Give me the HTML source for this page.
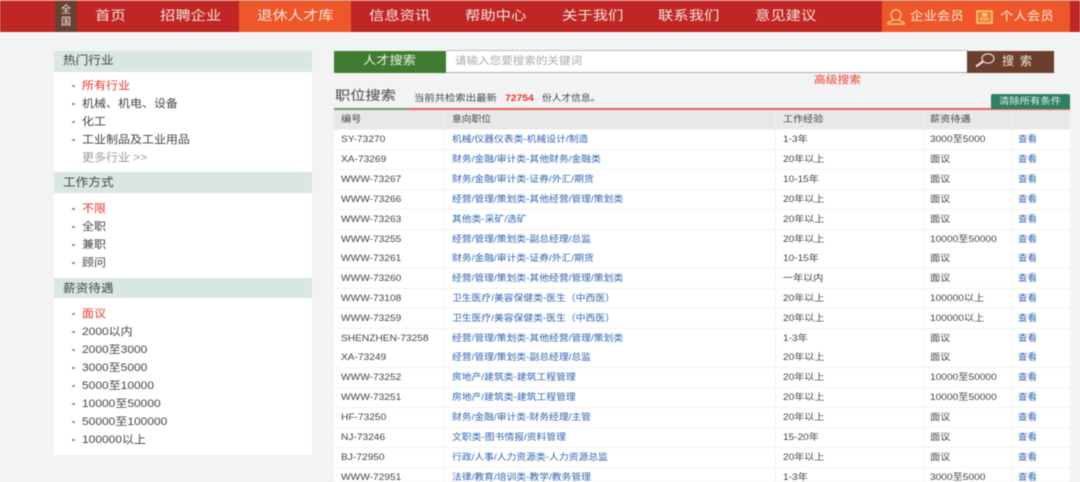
<!DOCTYPE html>
<html lang="zh"><head><meta charset="utf-8"><title>人才搜索</title>
<style>
*{box-sizing:border-box;margin:0;padding:0}
html,body{width:1080px;height:482px;overflow:hidden;background:#f3f3f3}
body{position:relative;font-family:"Liberation Sans","Noto Sans CJK SC",sans-serif}
#w{position:absolute;left:0;top:0;width:1080px;height:482px;overflow:hidden;filter:blur(.45px)}
.b{position:absolute}
.t{position:absolute;white-space:nowrap;transform-origin:0 50%;font-style:normal;line-height:14px;height:14px}
.n{font-size:13px;color:#f6e4dc;top:9px;transform:scaleX(1.18)}
.m{font-size:12px;color:#fbeade;top:9px;transform:scaleX(1.12)}
.h{font-size:11.5px;color:#444;left:63px;transform:scaleX(1.1)}
.s{font-size:11px;color:#444;left:82px;transform:translateY(1px) scaleX(1.09)}
.s.on{color:#e8352c}
.d{position:absolute;left:72px;width:3px;height:2px;background:#5fae95}
.r{position:absolute;left:334px;width:736px;height:19px;background:#fff}
.r i{position:absolute;font-style:normal;white-space:nowrap;top:3px;line-height:13px;font-size:9px;transform-origin:0 50%;color:#444}
.a{left:7px;transform:scaleX(1.13)}
.c{left:118px;color:#2f63b0!important;transform:scaleX(1.09)}
.e{left:449px;transform:scaleX(1.12)}
.f{left:596px;transform:scaleX(1.13)}
.g{left:684px;color:#2f63b0!important;transform:scaleX(1.05)}
.v{position:absolute;top:110px;width:1px;height:372px;background:#f0f0f0}
</style></head><body><div id="w">
<div class="b" style="left:0;top:0;width:1080px;height:32px;background:#c02624;border-top:1px solid #d98a80"></div>
<div class="b" style="left:55px;top:1px;width:22px;height:31px;background:#6b4033"></div>
<i class="t" style="left:61px;top:4px;font-size:10px;color:#eee">全</i>
<i class="t" style="left:61px;top:16px;font-size:10px;color:#eee">国</i>
<div class="b" style="left:239px;top:1px;width:112px;height:31px;background:#ee572a"></div>
<div class="b" style="left:882px;top:1px;width:188px;height:31px;background:#ee572a"></div>
<i class="t n" style="left:95px">首页</i>
<i class="t n" style="left:160px">招聘企业</i>
<i class="t n" style="left:257px">退休人才库</i>
<i class="t n" style="left:369px">信息资讯</i>
<i class="t n" style="left:465px">帮助中心</i>
<i class="t n" style="left:562px">关于我们</i>
<i class="t n" style="left:658px">联系我们</i>
<i class="t n" style="left:755px">意见建议</i>
<svg class="b" style="left:886px;top:9px" width="20" height="16" viewBox="0 0 20 16" fill="none" stroke="#f6c27a" stroke-width="1.4"><ellipse cx="10" cy="6" rx="5" ry="5.2"/><path d="M7 10.500C6.500 12.500 3.500 12.500 2 13.500V15H18V13.500C16.500 12.500 13.500 12.500 13 10.500"/></svg>
<i class="t m" style="left:910px">企业会员</i>
<svg class="b" style="left:976px;top:10px" width="17" height="14" viewBox="0 0 17 14"><rect x="1" y="1" width="15" height="12" fill="#ee7a3a" stroke="#f8cf78" stroke-width="1.500"/><rect x="6" y="3" width="5" height="3.500" fill="#f8cf78"/><rect x="4" y="7.500" width="9" height="3" fill="#f4a860"/></svg>
<i class="t m" style="left:1000px">个人会员</i>

<div class="b" style="left:54px;top:51px;width:258px;height:404px;background:#fff"></div>
<div class="b" style="left:54px;top:51px;width:258px;height:21px;background:#d9e6e2"></div>
<div class="b" style="left:54px;top:172px;width:258px;height:21px;background:#d9e6e2"></div>
<div class="b" style="left:54px;top:278px;width:258px;height:20px;background:#d9e6e2"></div>
<i class="t h" style="top:54px">热门行业</i>
<i class="t h" style="top:176px">工作方式</i>
<i class="t h" style="top:282px">薪资待遇</i>

<b class="d" style="top:85px"></b><i class="t s on" style="top:78px">所有行业</i>
<b class="d" style="top:103px"></b><i class="t s" style="top:96px">机械、机电、设备</i>
<b class="d" style="top:121px"></b><i class="t s" style="top:114px">化工</i>
<b class="d" style="top:139px"></b><i class="t s" style="top:132px">工业制品及工业用品</i>
<i class="t s" style="top:150px;color:#999">更多行业 &gt;&gt;</i>
<b class="d" style="top:208px"></b><i class="t s on" style="top:201px">不限</i>
<b class="d" style="top:226px"></b><i class="t s" style="top:219px">全职</i>
<b class="d" style="top:244px"></b><i class="t s" style="top:237px">兼职</i>
<b class="d" style="top:262px"></b><i class="t s" style="top:255px">顾问</i>
<b class="d" style="top:313px"></b><i class="t s on" style="top:306px">面议</i>
<b class="d" style="top:331px"></b><i class="t s" style="top:324px">2000以内</i>
<b class="d" style="top:349px"></b><i class="t s" style="top:342px">2000至3000</i>
<b class="d" style="top:367px"></b><i class="t s" style="top:360px">3000至5000</i>
<b class="d" style="top:385px"></b><i class="t s" style="top:378px">5000至10000</i>
<b class="d" style="top:403px"></b><i class="t s" style="top:396px">10000至50000</i>
<b class="d" style="top:421px"></b><i class="t s" style="top:414px">50000至100000</i>
<b class="d" style="top:439px"></b><i class="t s" style="top:432px">100000以上</i>

<div class="b" style="left:334px;top:51px;width:112px;height:22px;background:#3f7c31"></div>
<i class="t" style="left:363px;top:54px;font-size:11.5px;color:#eef3e8;transform:scaleX(1.15)">人才搜索</i>
<div class="b" style="left:446px;top:50px;width:522px;height:23px;background:#fff;border-top:1px solid #b9bcc4;border-bottom:1px solid #a9acb4"></div>
<i class="t" style="left:455px;top:54px;font-size:10.5px;color:#aaa;transform:scaleX(1.1)">请输入您要搜索的关键词</i>
<div class="b" style="left:967px;top:51px;width:87px;height:22px;background:#6b3f2d"></div>
<svg class="b" style="left:974px;top:52px" width="24" height="20" viewBox="0 0 24 20" fill="none" stroke="#e6dcd4" stroke-width="1.2"><ellipse cx="14" cy="6.500" rx="6" ry="4.700"/><path d="M9 9.500L2 14.500" stroke-width="2.2"/></svg>
<i class="t" style="left:1002px;top:54px;font-size:12px;color:#f0e8e0;letter-spacing:6px">搜索</i>
<i class="t" style="left:814px;top:73px;font-size:10.5px;color:#ef4135;transform:scaleX(1.12)">高级搜索</i>

<i class="t" style="left:335px;top:89px;font-size:13px;color:#444;transform:scaleX(1.17)">职位搜索</i>
<i class="t" style="left:414px;top:91px;font-size:9px;color:#444;transform:scaleX(1.15)">当前共检索出最新</i>
<i class="t" style="left:505px;top:91px;font-size:9px;font-weight:bold;color:#e8352c;transform:scaleX(1.15)">72754</i>
<i class="t" style="left:542px;top:91px;font-size:9px;color:#444;transform:scaleX(1.08)">份人才信息。</i>
<div class="b" style="left:334px;top:108px;width:736px;height:2px;background:#e8615a"></div>
<div class="b" style="left:334px;top:108px;width:73px;height:2px;background:#6aa45c"></div>
<div class="b" style="left:991px;top:94px;width:79px;height:15px;background:#2f7f65;border-radius:2px 2px 0 0"></div>
<i class="t" style="left:999px;top:94px;font-size:9px;color:#e4f0ea;transform:scaleX(1.15)">清除所有条件</i>

<div class="r" style="top:110px;height:19px;background:#e8e8e8"><i class="a">编号</i><i class="c" style="color:#444!important">意向职位</i><i class="e">工作经验</i><i class="f">薪资待遇</i></div>
<div class="r" style="top:130px"><i class="a">SY-73270</i><i class="c">机械/仪器仪表类-机械设计/制造</i><i class="e">1-3年</i><i class="f">3000至5000</i><i class="g">查看</i></div>
<div class="r" style="top:150px"><i class="a">XA-73269</i><i class="c">财务/金融/审计类-其他财务/金融类</i><i class="e">20年以上</i><i class="f">面议</i><i class="g">查看</i></div>
<div class="r" style="top:170px"><i class="a">WWW-73267</i><i class="c">财务/金融/审计类-证券/外汇/期货</i><i class="e">10-15年</i><i class="f">面议</i><i class="g">查看</i></div>
<div class="r" style="top:190px"><i class="a">WWW-73266</i><i class="c">经营/管理/策划类-其他经营/管理/策划类</i><i class="e">20年以上</i><i class="f">面议</i><i class="g">查看</i></div>
<div class="r" style="top:210px"><i class="a">WWW-73263</i><i class="c">其他类-采矿/选矿</i><i class="e">20年以上</i><i class="f">面议</i><i class="g">查看</i></div>
<div class="r" style="top:230px"><i class="a">WWW-73255</i><i class="c">经营/管理/策划类-副总经理/总监</i><i class="e">20年以上</i><i class="f">10000至50000</i><i class="g">查看</i></div>
<div class="r" style="top:249px"><i class="a">WWW-73261</i><i class="c">财务/金融/审计类-证券/外汇/期货</i><i class="e">10-15年</i><i class="f">面议</i><i class="g">查看</i></div>
<div class="r" style="top:269px"><i class="a">WWW-73260</i><i class="c">经营/管理/策划类-其他经营/管理/策划类</i><i class="e">一年以内</i><i class="f">面议</i><i class="g">查看</i></div>
<div class="r" style="top:289px"><i class="a">WWW-73108</i><i class="c">卫生医疗/美容保健类-医生（中西医）</i><i class="e">20年以上</i><i class="f">100000以上</i><i class="g">查看</i></div>
<div class="r" style="top:309px"><i class="a">WWW-73259</i><i class="c">卫生医疗/美容保健类-医生（中西医）</i><i class="e">20年以上</i><i class="f">100000以上</i><i class="g">查看</i></div>
<div class="r" style="top:329px"><i class="a">SHENZHEN-73258</i><i class="c">经营/管理/策划类-其他经营/管理/策划类</i><i class="e">1-3年</i><i class="f">面议</i><i class="g">查看</i></div>
<div class="r" style="top:348px"><i class="a">XA-73249</i><i class="c">经营/管理/策划类-副总经理/总监</i><i class="e">20年以上</i><i class="f">面议</i><i class="g">查看</i></div>
<div class="r" style="top:368px"><i class="a">WWW-73252</i><i class="c">房地产/建筑类-建筑工程管理</i><i class="e">20年以上</i><i class="f">10000至50000</i><i class="g">查看</i></div>
<div class="r" style="top:388px"><i class="a">WWW-73251</i><i class="c">房地产/建筑类-建筑工程管理</i><i class="e">20年以上</i><i class="f">10000至50000</i><i class="g">查看</i></div>
<div class="r" style="top:408px"><i class="a">HF-73250</i><i class="c">财务/金融/审计类-财务经理/主管</i><i class="e">20年以上</i><i class="f">面议</i><i class="g">查看</i></div>
<div class="r" style="top:428px"><i class="a">NJ-73246</i><i class="c">文职类-图书情报/资料管理</i><i class="e">15-20年</i><i class="f">面议</i><i class="g">查看</i></div>
<div class="r" style="top:448px"><i class="a">BJ-72950</i><i class="c">行政/人事/人力资源类-人力资源总监</i><i class="e">20年以上</i><i class="f">面议</i><i class="g">查看</i></div>
<div class="r" style="top:468px"><i class="a">WWW-72951</i><i class="c">法律/教育/培训类-教学/教务管理</i><i class="e">1-3年</i><i class="f">3000至5000</i><i class="g">查看</i></div>
<div class="v" style="left:444px"></div>
<div class="v" style="left:775px"></div>
<div class="v" style="left:923px"></div>
<div class="v" style="left:1011px"></div>
</div></body></html>
